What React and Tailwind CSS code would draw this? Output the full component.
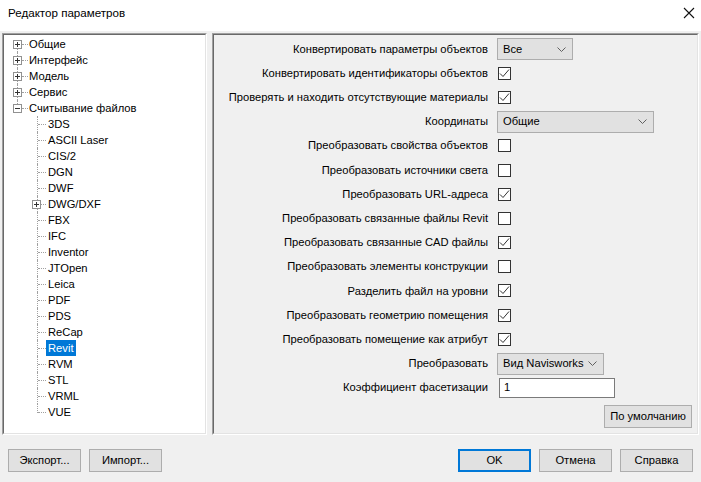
import React from 'react';

const topItems = ['Общие', 'Интерфейс', 'Модель', 'Сервис'];
const children = [
  '3DS', 'ASCII Laser', 'CIS/2', 'DGN', 'DWF', 'DWG/DXF', 'FBX', 'IFC', 'Inventor',
  'JTOpen', 'Leica', 'PDF', 'PDS', 'ReCap', 'Revit', 'RVM', 'STL', 'VRML', 'VUE',
];

const rows = [
  { label: 'Конвертировать параметры объектов', type: 'combo', value: 'Все', w: 'w-[76px]' },
  { label: 'Конвертировать идентификаторы объектов', type: 'check', checked: true },
  { label: 'Проверять и находить отсутствующие материалы', type: 'check', checked: true },
  { label: 'Координаты', type: 'combo', value: 'Общие', w: 'w-[157px]' },
  { label: 'Преобразовать свойства объектов', type: 'check', checked: false },
  { label: 'Преобразовать источники света', type: 'check', checked: false },
  { label: 'Преобразовать URL-адреса', type: 'check', checked: true },
  { label: 'Преобразовать связанные файлы Revit', type: 'check', checked: false },
  { label: 'Преобразовать связанные CAD файлы', type: 'check', checked: true },
  { label: 'Преобразовать элементы конструкции', type: 'check', checked: false },
  { label: 'Разделить файл на уровни', type: 'check', checked: true },
  { label: 'Преобразовать геометрию помещения', type: 'check', checked: true },
  { label: 'Преобразовать помещение как атрибут', type: 'check', checked: true },
  { label: 'Преобразовать', type: 'combo', value: 'Вид Navisworks', w: 'w-[107px]' },
  { label: 'Коэффициент фасетизации', type: 'input', value: '1' },
];

function Expander({ open, className }) {
  return (
    <span className={`absolute w-[9px] h-[9px] border border-[#919191] bg-white ${className}`}>
      <span className="absolute left-[1px] top-[3px] w-[5px] h-[1px] bg-[#333]" />
      {!open && <span className="absolute left-[3px] top-[1px] w-[1px] h-[5px] bg-[#333]" />}
    </span>
  );
}

function Chevron() {
  return (
    <svg width="9" height="5" viewBox="0 0 9 5" className="shrink-0">
      <polyline points="0.5,0.5 4.5,4.5 8.5,0.5" fill="none" stroke="#606060" strokeWidth="1" />
    </svg>
  );
}

function Checkbox({ checked }) {
  return (
    <span className="ml-[1px] w-[13px] h-[13px] border border-[#333] bg-white flex items-center justify-center">
      {checked && (
        <svg width="11" height="11" viewBox="0 0 11 11">
          <polyline points="1,5.5 4,8.5 10,1.5" fill="none" stroke="#333" strokeWidth="1" />
        </svg>
      )}
    </span>
  );
}

function Button({ children, primary, className = '' }) {
  return (
    <button
      className={`h-[23px] w-[73px] bg-[#e1e1e1] text-black flex items-center justify-center whitespace-nowrap ${
        primary ? 'border-2 border-[#0078d7]' : 'border border-[#adadad]'
      } ${className}`}
    >
      {children}
    </button>
  );
}

export default function App() {
  return (
    <div className="w-[701px] h-[482px] bg-[#f0f0f0] font-['Liberation_Sans',Arial,sans-serif] text-[11.2px] text-black overflow-hidden select-none">
      {/* Title bar */}
      <div className="h-[31px] bg-white flex items-start justify-between pl-[8px] pr-[6px] pt-[5px]">
        <span className="leading-[16px] text-[11.6px]">Редактор параметров</span>
        <svg width="12" height="12" viewBox="0 0 12 12" className="mt-[2px]">
          <path d="M1 1 L11 11 M11 1 L1 11" stroke="#111" strokeWidth="1.1" />
        </svg>
      </div>

      <div className="flex gap-[5px] pl-[2px] pr-[2px] pt-[2px]">
        {/* Tree */}
        <div className="w-[205px] h-[402px] border border-t-[#a0a0a0] border-l-[#a0a0a0] border-b-white border-r-white">
          <div className="h-full border border-t-[#696969] border-l-[#696969] border-b-[#e3e3e3] border-r-[#e3e3e3] bg-white pt-[1px]">
            {topItems.map((t, i) => (
              <div key={t} className="relative h-4 flex items-center">
                {i > 0 && <span className="absolute left-[13px] top-0 h-[4px] border-l border-dotted border-[#a0a0a0]" />}
                <span className="absolute left-[13px] top-[13px] h-[3px] border-l border-dotted border-[#a0a0a0]" />
                <Expander className="left-[9px] top-[4px]" />
                <span className="absolute left-[18px] top-[8px] w-[6px] border-t border-dotted border-[#a0a0a0]" />
                <span className="ml-[25px] leading-[16px]">{t}</span>
              </div>
            ))}
            <div className="relative h-4 flex items-center">
              <span className="absolute left-[13px] top-0 h-[4px] border-l border-dotted border-[#a0a0a0]" />
              <Expander open className="left-[9px] top-[4px]" />
              <span className="absolute left-[18px] top-[8px] w-[6px] border-t border-dotted border-[#a0a0a0]" />
              <span className="ml-[25px] leading-[16px]">Считывание файлов</span>
            </div>
            {children.map((c, i) => {
              const last = i === children.length - 1;
              const selected = c === 'Revit';
              return (
                <div key={c} className="relative h-4 flex items-center">
                  <span
                    className={`absolute left-[33px] top-0 border-l border-dotted border-[#a0a0a0] ${
                      last ? 'h-[9px]' : 'h-4'
                    }`}
                  />
                  {c === 'DWG/DXF' ? (
                    <>
                      <Expander className="left-[28px] top-[4px]" />
                      <span className="absolute left-[37px] top-[8px] w-[5px] border-t border-dotted border-[#a0a0a0]" />
                    </>
                  ) : (
                    <span className="absolute left-[34px] top-[8px] w-[8px] border-t border-dotted border-[#a0a0a0]" />
                  )}
                  <span
                    className={`ml-[42px] px-[2px] leading-[16px] ${selected ? 'bg-[#0078d7] text-white' : ''}`}
                  >
                    {c}
                  </span>
                </div>
              );
            })}
          </div>
        </div>

        {/* Settings */}
        <div className="w-[487px] h-[402px] border border-t-[#a0a0a0] border-l-[#a0a0a0] border-b-white border-r-white">
          <div className="h-full flex flex-col border border-t-[#696969] border-l-[#696969] border-b-[#e3e3e3] border-r-[#e3e3e3] pt-[2px]">
            <div className="grid grid-cols-[274px_1fr] gap-x-[9px]">
              {rows.map((r) => (
                <React.Fragment key={r.label}>
                  <div className="h-[24.2px] flex items-center justify-end whitespace-nowrap">{r.label}</div>
                  <div className="h-[24.2px] flex items-center">
                    {r.type === 'check' && <Checkbox checked={r.checked} />}
                    {r.type === 'combo' && (
                      <div
                        className={`${r.w} h-[22px] bg-[#e1e1e1] border border-[#adadad] flex items-center justify-between pl-[5px] pr-[6px] whitespace-nowrap`}
                      >
                        <span>{r.value}</span>
                        <Chevron />
                      </div>
                    )}
                    {r.type === 'input' && (
                      <div className="ml-[2px] w-[116px] h-[20px] bg-white border border-[#7a7a7a] flex items-center pl-[4px]">
                        {r.value}
                      </div>
                    )}
                  </div>
                </React.Fragment>
              ))}
            </div>
            <div className="flex-1" />
            <div className="flex justify-end pr-[5px] pb-[5px]">
              <Button className="w-[88px]">По умолчанию</Button>
            </div>
          </div>
        </div>
      </div>

      {/* Bottom buttons */}
      <div className="flex justify-between px-[8px] mt-[14px]">
        <div className="flex gap-[8px]">
          <Button>Экспорт...</Button>
          <Button>Импорт...</Button>
        </div>
        <div className="flex gap-[8px]">
          <Button primary>OK</Button>
          <Button>Отмена</Button>
          <Button>Справка</Button>
        </div>
      </div>
    </div>
  );
}
